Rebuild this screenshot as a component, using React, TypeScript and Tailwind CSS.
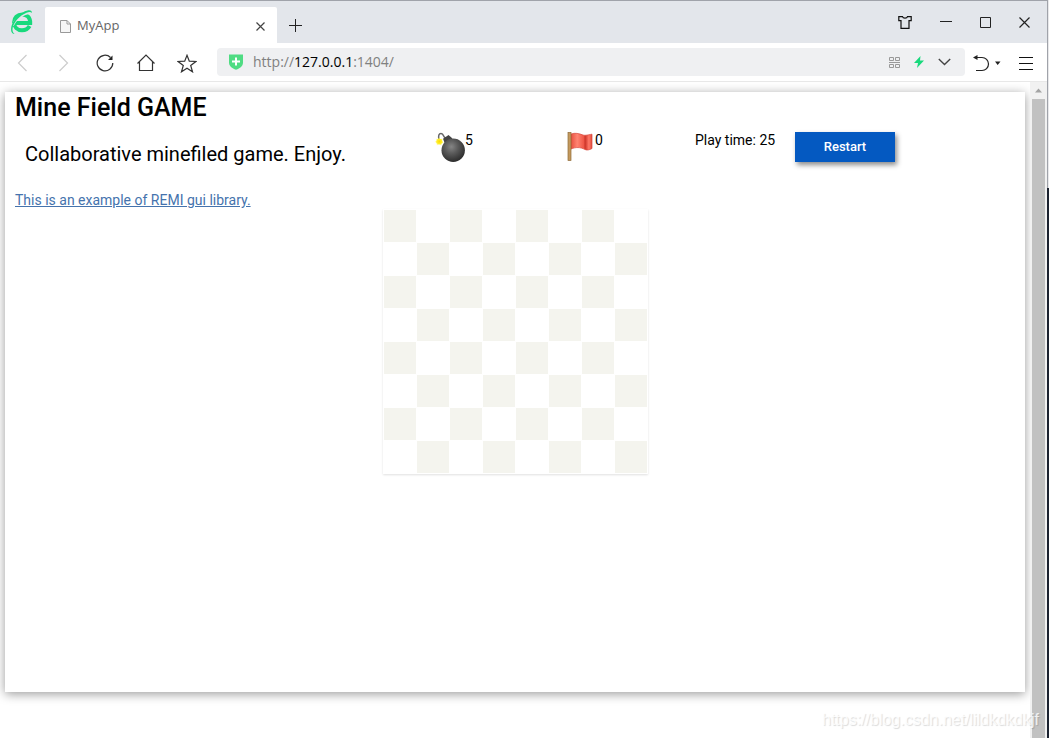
import { useState } from 'react'

const SIZE = 8

function BrowserLogo() {
  return (
    <svg width="24" height="26" viewBox="0 0 24 26" fill="none" aria-hidden="true">
      <path
        d="M5 14H20.2C20.4 8.6 16.9 5.4 12.2 5.4C7.4 5.4 4 8.8 4 13.4C4 18 7.4 21.2 12 21.2C15.4 21.2 18 19.8 19.6 17"
        stroke="#18d97c"
        strokeWidth="4"
      />
      <path d="M2.5 16.5C5 10.5 12 4.8 20 3.2" stroke="#e3e6eb" strokeWidth="2.6" />
      <path
        d="M1.5 17C3.5 10 10.5 3 17.5 1.4C20.5 .8 22.2 1.8 21.8 4C21 2.8 19 2.8 16.5 3.7C10 6.4 4.4 12.5 2.8 18C2 21.2 2.6 23.6 4.6 24.8C1.8 25.2 .3 22 1.5 17Z"
        fill="#18d97c"
      />
    </svg>
  )
}

function Bomb() {
  return (
    <svg width="30" height="30" viewBox="0 0 30 30" aria-hidden="true">
      <defs>
        <radialGradient id="ball" cx="0.42" cy="0.35" r="0.65">
          <stop offset="0" stopColor="#858585" />
          <stop offset="0.45" stopColor="#5a5a5a" />
          <stop offset="1" stopColor="#2d2d2d" />
        </radialGradient>
        <radialGradient id="spark">
          <stop offset="0" stopColor="#ffd800" />
          <stop offset="0.6" stopColor="#fff12e" />
          <stop offset="1" stopColor="#fff780" stopOpacity="0.4" />
        </radialGradient>
      </defs>
      <path d="M4 8C3 3 4 1.6 6 1.6C9.5 1.6 7.5 5.5 11 6" fill="none" stroke="#666" strokeWidth="1.5" />
      <path d="M8 6.8L13.5 3L17.5 6.4L10 12Z" fill="#444" />
      <circle cx="18.2" cy="18.3" r="11.7" fill="url(#ball)" />
      <path
        d="M4 5.4L5.4 7L7.8 6.6L7.2 9L8.8 10.6L6.8 11.6L6.2 13.6L4 12.6L1.8 13.4L1.5 11.2L0 9.7L1.5 8.6L1.2 6.4L3 7Z"
        fill="url(#spark)"
      />
    </svg>
  )
}

function Flag() {
  return (
    <svg width="30" height="30" viewBox="0 0 30 30" aria-hidden="true">
      <defs>
        <linearGradient id="cloth">
          <stop offset="0" stopColor="#e8503f" />
          <stop offset="0.3" stopColor="#ff8472" />
          <stop offset="0.6" stopColor="#ef5747" />
          <stop offset="0.7" stopColor="#d43c30" />
          <stop offset="0.85" stopColor="#ff7a69" />
          <stop offset="1" stopColor="#e04a3c" />
        </linearGradient>
      </defs>
      <path
        d="M6 2C10 .5 14 1.5 18 3C20 3.6 22 3 27 2.2V16.5C24 18 22 18.5 20 17.5C15 15 11 15 6 17Z"
        fill="url(#cloth)"
        stroke="#d8453a"
        strokeWidth="0.7"
      />
      <path d="M20 4V16.5" stroke="#c9362d" strokeWidth="0.7" />
      <rect x="3" y="0.5" width="3" height="28" fill="#c49a5e" stroke="#8f6a38" strokeWidth="0.7" />
    </svg>
  )
}

function TabStrip() {
  return (
    <div className="flex h-[43px] items-end border-t border-[#a0a3aa] bg-[#e3e6eb]">
      <div className="flex w-[45px] justify-center self-center pr-0.5">
        <BrowserLogo />
      </div>
      <div className="flex h-9 w-[232px] items-center rounded-t-xs bg-white pt-0.5 pr-2.5 pl-[15px]">
        <svg width="11" height="13" viewBox="0 0 11 13" fill="#f6f6f6" stroke="#999" aria-hidden="true">
          <path d="M.5.5H7L10.5 4V12.5H.5ZM7 .5V4H10.5" />
        </svg>
        <span className="ml-1.5 flex-1 font-['Open_Sans',sans-serif] text-[13px] text-[#666]">MyApp</span>
        <button type="button" aria-label="Close tab" className="p-0.5">
          <svg width="9" height="9" viewBox="0 0 9 9" stroke="#444" strokeWidth="1.2">
            <path d="M.5.5L8.5 8.5M8.5.5L.5 8.5" />
          </svg>
        </button>
      </div>
      <button type="button" aria-label="New tab" className="mb-[11px] ml-3">
        <svg width="13" height="13" viewBox="0 0 13 13" stroke="#222">
          <path d="M0 6.5H13M6.5 0V13" />
        </svg>
      </button>
      <div className="mr-[17px] ml-auto flex items-center gap-7 self-center">
        <button type="button" aria-label="Skins">
          <svg width="14" height="13" viewBox="0 0 14 13" fill="none" stroke="#111" strokeWidth="1.2">
            <path d="M4.5.7H.8V4.6H3V12.3H11V4.6H13.2V.7H9.5C9 2.6 5 2.6 4.5.7Z" />
          </svg>
        </button>
        <button type="button" aria-label="Minimize">
          <svg width="12" height="11" viewBox="0 0 12 11" stroke="#222">
            <path d="M0 4.5H12" />
          </svg>
        </button>
        <button type="button" aria-label="Maximize">
          <svg width="11" height="11" viewBox="0 0 11 11" fill="none" stroke="#222">
            <path d="M.5.5H10.5V10.5H.5Z" />
          </svg>
        </button>
        <button type="button" aria-label="Close">
          <svg width="11" height="11" viewBox="0 0 11 11" stroke="#222" strokeWidth="1.2">
            <path d="M.5.5L10.5 10.5M10.5.5L.5 10.5" />
          </svg>
        </button>
      </div>
    </div>
  )
}

function Toolbar() {
  return (
    <div className="flex h-[39px] items-center border-b border-[#e8e8e8] bg-white pt-0.5 pr-3.5 pl-0.5">
      <div className="flex items-center">
        <button type="button" aria-label="Back" className="flex w-[41px] justify-center">
          <svg width="11" height="18" viewBox="0 0 11 18" fill="none" stroke="#ccc" strokeWidth="1.2">
            <path d="M9.5 1L1.5 9L9.5 17" />
          </svg>
        </button>
        <button type="button" aria-label="Forward" className="flex w-[41px] justify-center">
          <svg width="11" height="18" viewBox="0 0 11 18" fill="none" stroke="#ccc" strokeWidth="1.2">
            <path d="M1.5 1L9.5 9L1.5 17" />
          </svg>
        </button>
        <button type="button" aria-label="Reload" className="flex w-[41px] justify-center">
          <svg width="18" height="18" viewBox="0 0 18 18" fill="none" stroke="#333" strokeWidth="1.2">
            <path d="M14.5 3.5A7.8 7.8 0 1 0 16.8 9" />
            <path d="M16.5 1.5V6H12Z" fill="#222" stroke="none" />
          </svg>
        </button>
        <button type="button" aria-label="Home" className="flex w-[41px] justify-center">
          <svg width="18" height="18" viewBox="0 0 18 18" fill="none" stroke="#333" strokeWidth="1.2">
            <path d="M.5 9.5L9 1L17.5 9.5M2.5 8V16.5H15.5V8" />
          </svg>
        </button>
        <button type="button" aria-label="Bookmark" className="flex w-[41px] justify-center">
          <svg width="20" height="19" viewBox="0 0 20 19" fill="none" stroke="#333" strokeWidth="1.2">
            <path d="M10 1.3L12.3 7.2L18.9 7.5L13.7 11.5L15.5 17.8L10 14.2L4.5 17.8L6.3 11.5L1.1 7.5L7.7 7.2Z" />
          </svg>
        </button>
      </div>
      <div className="mb-0.5 ml-2.5 flex h-7 flex-1 items-center rounded-sm bg-[#eff0f2] pr-3.5 pl-3">
        <svg width="14" height="16" viewBox="0 0 14 16" aria-hidden="true">
          <path d="M0 .5H14V8.5C14 12 11 14.5 7 15.8C3 14.5 0 12 0 8.5Z" fill="#4fdc83" />
          <path d="M7 3.5V11.5M3 7.5H11" stroke="#fff" strokeWidth="2" />
        </svg>
        <p className="ml-2.5 flex-1 font-['Open_Sans',sans-serif] text-sm text-[#808080]">
          http://<span className="text-black">127.0.0.1</span>:1404/
        </p>
        <svg width="11" height="11" viewBox="0 0 11 11" fill="none" stroke="#999" aria-hidden="true">
          <path d="M.5.5H4.5V3.5H.5ZM6.5.5H10.5V3.5H6.5ZM0 5.5H11M.5 7.5H4.5V10.5H.5ZM6.5 7.5H10.5V10.5H6.5Z" />
        </svg>
        <svg className="ml-3.5" width="10" height="12" viewBox="0 0 10 12" fill="#18d97c" aria-hidden="true">
          <path d="M6.5 0L0 7H4L3 12L10 4.6H6Z" />
        </svg>
        <button type="button" aria-label="Address history" className="ml-3.5">
          <svg width="13" height="8" viewBox="0 0 13 8" fill="none" stroke="#444" strokeWidth="1.4">
            <path d="M.8 1L6.5 6.5L12.2 1" />
          </svg>
        </button>
      </div>
      <button type="button" aria-label="Restore closed tab" className="ml-2">
        <svg width="28" height="17" viewBox="0 0 28 17" fill="none" stroke="#222" strokeWidth="1.2">
          <path d="M2 2.5H9A6.5 6.5 0 0 1 9 15.5H3" />
          <path d="M0 2.5L4.5 0V5ZM22 6.5H27.5L24.7 10Z" fill="#222" stroke="none" />
        </svg>
      </button>
      <button type="button" aria-label="Menu" className="ml-[18px]">
        <svg width="14" height="13" viewBox="0 0 14 13" stroke="#111">
          <path d="M0 .5H14M0 6.5H14M0 12.5H14" />
        </svg>
      </button>
    </div>
  )
}

function Field() {
  return (
    <table className="mx-auto border-separate border-spacing-px bg-white shadow-[0_1px_2px_rgba(0,0,0,0.12)]">
      <tbody>
        {Array.from({ length: SIZE }, (_, row) => (
          <tr key={row}>
            {Array.from({ length: SIZE }, (_, col) => (
              <td key={col} className={`p-0 ${(row + col) % 2 === 0 ? 'bg-[#f4f4ee]' : 'bg-white'}`}>
                <button type="button" aria-label={`Cell ${row + 1}, ${col + 1}`} className="block size-8" />
              </td>
            ))}
          </tr>
        ))}
      </tbody>
    </table>
  )
}

export default function App() {
  const [time, setTime] = useState(25)

  return (
    <div className="relative flex h-screen overflow-hidden bg-white font-[Roboto,sans-serif] text-black">
      <div className="flex min-w-0 flex-1 flex-col">
        <TabStrip />
        <Toolbar />
        <div className="flex min-h-0 flex-1">
          <main className="min-w-0 flex-1 overflow-hidden px-[5px] pt-2.5">
            <div className="min-h-[600px] bg-white shadow-[0_2px_10px_rgba(0,0,0,0.4)]">
              <h1 className="pl-2.5 text-[25px] leading-8 font-medium">Mine Field GAME</h1>
              <div className="flex items-start pt-2 pl-5">
                <p className="w-[410px] pt-2 text-xl leading-7">Collaborative minefiled game. Enjoy.</p>
                <div className="flex w-[130px]">
                  <Bomb />
                  <span className="text-sm leading-4">5</span>
                </div>
                <div className="flex w-[130px]">
                  <Flag />
                  <span className="text-sm leading-4">0</span>
                </div>
                <span className="w-[100px] text-sm leading-4">Play time: {time}</span>
                <button
                  type="button"
                  onClick={() => setTime(0)}
                  className="h-[30px] w-[100px] bg-[#0459c1] text-[13px] font-medium text-white shadow-[2px_3px_5px_rgba(0,0,0,0.45)]"
                >
                  Restart
                </button>
              </div>
              <div className="pt-6 pl-2.5 text-sm leading-[17px]">
                <a href="https://github.com/dddomodossola/remi" className="text-[#4573ad] underline">
                  This is an example of REMI gui library.
                </a>
              </div>
              <Field />
            </div>
          </main>
          <div className="flex w-[17px] flex-col items-center bg-[#f1f1f1]">
            <svg className="my-[6px] shrink-0" width="7" height="5" viewBox="0 0 7 5" fill="#a3a3a3" aria-hidden="true">
              <path d="M0 4.5L3.5 .5L7 4.5Z" />
            </svg>
            <div className="w-[13px] flex-1 bg-[#c1c1c1]" />
          </div>
        </div>
      </div>
      <div className="flex w-0.5 flex-col">
        <div className="h-[188px] border-l border-[#a0a3aa] bg-[#e8e8ea]" />
        <div className="flex-1 bg-[#1b2230]" />
      </div>
      <span className="absolute right-2.5 bottom-1.5 font-['Liberation_Sans',Arial,sans-serif] text-base text-white/80 [text-shadow:1px_1px_1px_rgba(0,0,0,0.15)]">
        https://blog.csdn.net/lildkdkdkjf
      </span>
    </div>
  )
}
